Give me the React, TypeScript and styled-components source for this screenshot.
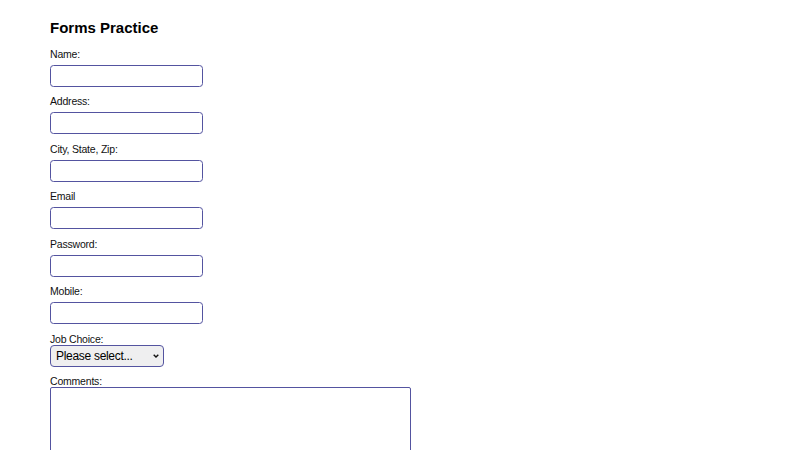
import React from 'react'
import styled, { createGlobalStyle } from 'styled-components'

const GlobalStyle = createGlobalStyle`
  body {
    margin: 0;
    background: #fff;
    font-family: "Liberation Sans", Arial, Helvetica, sans-serif;
    color: #000;
  }
`

const Page = styled.form`
  padding: 19px 0 0 50px;
`

const Title = styled.h3`
  margin: 0 0 12px;
  font-size: 15px;
  line-height: 17px;
  font-weight: bold;
`

const Field = styled.div`
  margin-bottom: 8.45px;
`

const Label = styled.label`
  display: block;
  font-size: 10.5px;
  letter-spacing: -0.2px;
  line-height: 12px;
  color: #111;
`

const TextInput = styled.input`
  display: block;
  box-sizing: border-box;
  margin-top: 5px;
  width: 153px;
  height: 22px;
  border: 1px solid #5454a0;
  border-radius: 3.5px;
  background: #fff;
  font-family: inherit;
  font-size: 11px;
  padding: 0 4px;
  outline: none;
`

const SelectWrap = styled.div`
  position: relative;
  width: 114px;
`

const Select = styled.select`
  display: block;
  box-sizing: border-box;
  width: 114px;
  height: 22px;
  border: 1px solid #5454a0;
  border-radius: 4px;
  background: #efeff0;
  font-family: inherit;
  font-size: 12px;
  letter-spacing: -0.3px;
  color: #000;
  padding: 0 16px 0 5px;
  appearance: none;
  outline: none;
`

const Chevron = styled.svg`
  position: absolute;
  right: 5px;
  top: 9px;
  width: 6px;
  height: 4px;
  pointer-events: none;
`

const TextArea = styled.textarea`
  display: block;
  box-sizing: border-box;
  width: 361px;
  height: 110px;
  border: 1px solid #5454a0;
  border-radius: 2px;
  background: #fff;
  resize: none;
  outline: none;
`

const fields = [
  { id: 'name', label: 'Name:', type: 'text' },
  { id: 'address', label: 'Address:', type: 'text' },
  { id: 'csz', label: 'City, State, Zip:', type: 'text' },
  { id: 'email', label: 'Email', type: 'email' },
  { id: 'password', label: 'Password:', type: 'password' },
  { id: 'mobile', label: 'Mobile:', type: 'tel' },
]

export default function App() {
  return (
    <>
      <GlobalStyle />
      <Page onSubmit={(e) => e.preventDefault()}>
        <Title>Forms Practice</Title>
        {fields.map((f) => (
          <Field key={f.id}>
            <Label htmlFor={f.id}>{f.label}</Label>
            <TextInput id={f.id} type={f.type} />
          </Field>
        ))}
        <Field>
          <Label htmlFor="job">Job Choice:</Label>
          <SelectWrap>
            <Select id="job" defaultValue="">
              <option value="">Please select...</option>
              <option value="dev">Developer</option>
              <option value="design">Designer</option>
            </Select>
            <Chevron viewBox="0 0 6 4">
              <path d="M0.7 0.7 L3 3 L5.3 0.7" fill="none" stroke="#111" strokeWidth="1.4" />
            </Chevron>
          </SelectWrap>
        </Field>
        <Field>
          <Label htmlFor="comments">Comments:</Label>
          <TextArea id="comments" />
        </Field>
      </Page>
    </>
  )
}
